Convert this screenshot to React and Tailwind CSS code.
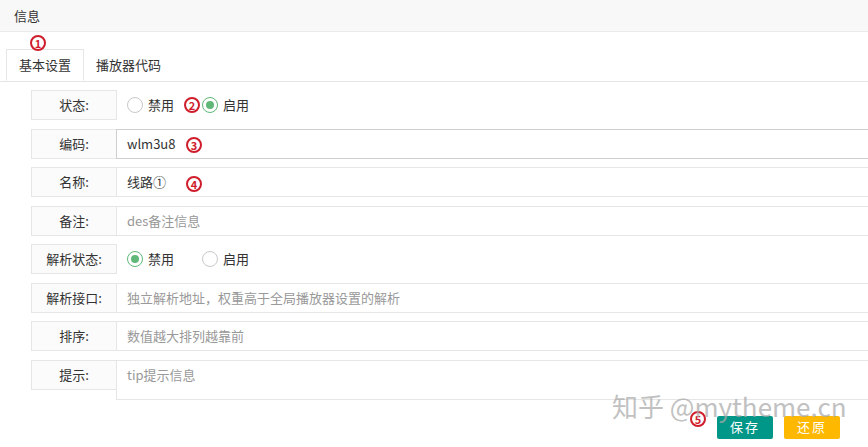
import React from "react"

const font = { fontFamily: '"Microsoft YaHei", "Noto Sans CJK SC", "Noto Sans", sans-serif' }

function Mark({ n, className = "" }) {
  return (
    <span
      className={`absolute flex h-[16px] w-[16px] items-center justify-center rounded-full border-2 border-[#cf1d2c] text-[11px] font-bold leading-none text-[#cf1d2c] ${className}`}
    >
      {n}
    </span>
  )
}

function Radio({ checked, label }) {
  return (
    <div className="flex items-center gap-[5px]">
      <span
        className={`flex h-[16px] w-[16px] items-center justify-center rounded-full border ${
          checked ? "border-[#5fb878]" : "border-[#c9c9c9]"
        }`}
      >
        {checked && <span className="h-[8px] w-[8px] rounded-full bg-[#5fb878]" />}
      </span>
      <span className="text-[13px] text-[#333]">{label}</span>
    </div>
  )
}

function Label({ children }) {
  return (
    <div className="flex h-[30px] w-[86px] shrink-0 items-center justify-center border border-[#e6e6e6] bg-[#fbfbfb] text-[13px] text-[#333]">
      {children}
    </div>
  )
}

function Field({ label, value, placeholder, dark = false }) {
  return (
    <div className="flex h-[30px]">
      <Label>{label}</Label>
      <div
        className={`-ml-px flex flex-1 items-center border border-r-0 pl-[10px] text-[13px] ${
          dark ? "border-[#cfcfcf]" : "border-[#e6e6e6]"
        } ${value ? "text-[#333]" : "text-[#999]"}`}
      >
        {value || placeholder}
      </div>
    </div>
  )
}

export default function App() {
  return (
    <div className="relative h-[447px] w-[868px] overflow-hidden bg-white" style={font}>
      {/* header */}
      <div className="flex h-[32px] items-center border-b border-[#eaeaea] bg-[#f8f8f8] px-[14px] text-[13px] text-[#333]">
        信息
      </div>

      {/* tabs */}
      <div className="mt-[17px] flex border-b border-[#e6e6e6] pl-[6px]">
        <div className="-mb-px flex h-[32px] items-center border border-[#e6e6e6] border-b-white bg-white px-[12px] text-[13px] text-[#333]">
          基本设置
        </div>
        <div className="flex h-[32px] items-center px-[12px] text-[13px] text-[#333]">播放器代码</div>
      </div>

      {/* form */}
      <div className="mt-[8px] flex flex-col gap-[8.5px] pl-[31px]">
        <div className="flex h-[30px]">
          <Label>状态:</Label>
          <div className="flex items-center gap-[28px] pl-[10px]">
            <Radio label="禁用" />
            <Radio checked label="启用" />
          </div>
        </div>
        <Field label="编码:" value="wlm3u8" dark />
        <Field label="名称:" value="线路①" />
        <Field label="备注:" placeholder="des备注信息" />
        <div className="flex h-[30px]">
          <Label>解析状态:</Label>
          <div className="flex items-center gap-[28px] pl-[10px]">
            <Radio checked label="禁用" />
            <Radio label="启用" />
          </div>
        </div>
        <Field label="解析接口:" placeholder="独立解析地址，权重高于全局播放器设置的解析" />
        <Field label="排序:" placeholder="数值越大排列越靠前" />
        <div className="flex items-start">
          <Label>提示:</Label>
          <div className="-ml-px h-[40px] flex-1 border border-r-0 border-[#e6e6e6] pl-[10px] pt-[4px] text-[13px] text-[#999]">
            tip提示信息
          </div>
        </div>
      </div>

      {/* buttons */}
      <div className="mt-[16px] flex justify-end gap-[11px] pr-[28px]">
        <button className="h-[23px] w-[56px] rounded-[2px] bg-[#009688] text-[13px] tracking-[2px] text-white">
          保存
        </button>
        <button className="h-[23px] w-[56px] rounded-[2px] bg-[#ffb800] text-[13px] tracking-[2px] text-white">
          还原
        </button>
      </div>

      {/* annotations */}
      <Mark n="1" className="left-[30px] top-[35px]" />
      <Mark n="2" className="left-[184px] top-[97px]" />
      <Mark n="3" className="left-[186px] top-[137px]" />
      <Mark n="4" className="left-[186px] top-[176px]" />
      <Mark n="5" className="left-[690px] top-[411px]" />

      {/* watermark */}
      <div className="pointer-events-none absolute left-[612px] top-[393px] text-[26px] leading-none text-[#a8a8a8] opacity-70">
        知乎 @mytheme.cn
      </div>
    </div>
  )
}
